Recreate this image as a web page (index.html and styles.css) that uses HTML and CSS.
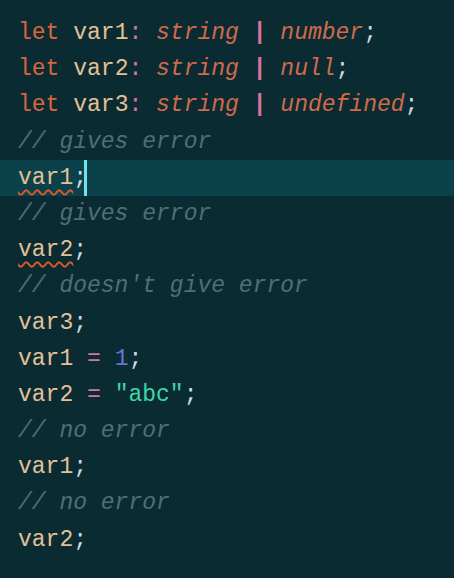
FILE: index.html
```html
<!DOCTYPE html>
<html>
<head>
<meta charset="utf-8">
<link rel="stylesheet" href="styles.css">
</head>
<body>
<div class="editor">
  <div class="line"><span class="kw">let</span> <span class="id">var1</span><span class="op">:</span> <span class="ty">string</span> <span class="bar">|</span> <span class="ty">number</span><span class="pn">;</span></div>
  <div class="line"><span class="kw">let</span> <span class="id">var2</span><span class="op">:</span> <span class="ty">string</span> <span class="bar">|</span> <span class="ty">null</span><span class="pn">;</span></div>
  <div class="line"><span class="kw">let</span> <span class="id">var3</span><span class="op">:</span> <span class="ty">string</span> <span class="bar">|</span> <span class="ty">undefined</span><span class="pn">;</span></div>
  <div class="line"><span class="cm">// gives error</span></div>
  <div class="line current"><span class="id err">var1</span><span class="pn">;</span><span class="cursor"></span></div>
  <div class="line"><span class="cm">// gives error</span></div>
  <div class="line"><span class="id err">var2</span><span class="pn">;</span></div>
  <div class="line"><span class="cm">// doesn't give error</span></div>
  <div class="line"><span class="id">var3</span><span class="pn">;</span></div>
  <div class="line"><span class="id">var1</span> <span class="op">=</span> <span class="num">1</span><span class="pn">;</span></div>
  <div class="line"><span class="id">var2</span> <span class="op">=</span> <span class="str">"abc"</span><span class="pn">;</span></div>
  <div class="line"><span class="cm">// no error</span></div>
  <div class="line"><span class="id">var1</span><span class="pn">;</span></div>
  <div class="line"><span class="cm">// no error</span></div>
  <div class="line"><span class="id">var2</span><span class="pn">;</span></div>
</div>
</body>
</html>
```

FILE: styles.css
```css
html, body {
  margin: 0;
  padding: 0;
  background: #0b2b33;
  height: 100%;
}
.editor {
  padding-top: 15px;
  font-family: "Liberation Mono", "Courier New", monospace;
  font-size: 23px;
}
.line {
  height: 36.2px;
  line-height: 36.2px;
  padding-left: 18px;
  white-space: pre;
  color: #d9e4e6;
}
.line.current {
  background: #0a414a;
}
.kw { color: #d9663e; }
.id { color: #e2c196; }
.op { color: #d874a0; }
.bar { color: #d874a0; font-weight: bold; }
.ty { color: #d06a4b; font-style: italic; }
.pn { color: #c9dbe0; }
.cm { color: #4c7078; font-style: italic; }
.num { color: #6b72d6; }
.str { color: #3fd5a6; }
.err {
  text-decoration: underline wavy #e2582c;
  text-decoration-thickness: 1.5px;
  text-underline-offset: 5px;
  text-decoration-skip-ink: none;
}
.cursor {
  display: inline-block;
  width: 3px;
  height: 36px;
  margin-left: -3px;
  vertical-align: top;
  background: #6ee3ee;
}
```
